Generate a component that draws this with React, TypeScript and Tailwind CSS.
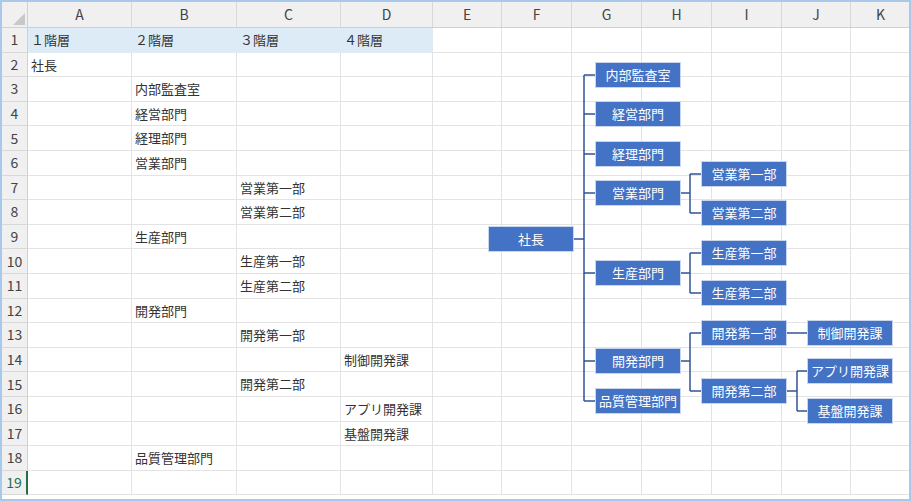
import React from "react";

const cols = [
  { n: "A", w: 104 },
  { n: "B", w: 105 },
  { n: "C", w: 104 },
  { n: "D", w: 92 },
  { n: "E", w: 69 },
  { n: "F", w: 70 },
  { n: "G", w: 70 },
  { n: "H", w: 70 },
  { n: "I", w: 70 },
  { n: "J", w: 69 },
  { n: "K", w: 60 },
];

const data: Record<number, string[]> = {
  1: ["１階層", "２階層", "３階層", "４階層"],
  2: ["社長"],
  3: ["", "内部監査室"],
  4: ["", "経営部門"],
  5: ["", "経理部門"],
  6: ["", "営業部門"],
  7: ["", "", "営業第一部"],
  8: ["", "", "営業第二部"],
  9: ["", "生産部門"],
  10: ["", "", "生産第一部"],
  11: ["", "", "生産第二部"],
  12: ["", "開発部門"],
  13: ["", "", "開発第一部"],
  14: ["", "", "", "制御開発課"],
  15: ["", "", "開発第二部"],
  16: ["", "", "", "アプリ開発課"],
  17: ["", "", "", "基盤開発課"],
  18: ["", "品質管理部門"],
};

// chart boxes: [label, x, y] in page coords, 86x26
const boxes: [string, number, number][] = [
  ["社長", 488, 226],
  ["内部監査室", 595, 62],
  ["経営部門", 595, 101],
  ["経理部門", 595, 141],
  ["営業部門", 595, 180],
  ["生産部門", 595, 260],
  ["開発部門", 595, 348],
  ["品質管理部門", 595, 388],
  ["営業第一部", 701, 161],
  ["営業第二部", 701, 200],
  ["生産第一部", 701, 240],
  ["生産第二部", 701, 280],
  ["開発第一部", 701, 320],
  ["開発第二部", 701, 378],
  ["制御開発課", 807, 320],
  ["アプリ開発課", 807, 358],
  ["基盤開発課", 807, 398],
];

const lines = [
  "M574 239H584",
  "M584 75V401",
  "M584 75H595M584 114H595M584 154H595M584 193H595M584 273H595M584 361H595M584 401H595",
  "M681 193H690M690 174V213M690 174H701M690 213H701",
  "M681 273H690M690 253V293M690 253H701M690 293H701",
  "M681 361H690M690 333V391M690 333H701M690 391H701",
  "M787 333H807",
  "M787 391H797M797 371V411M797 371H807M797 411H807",
];

export default function App() {
  const font = { fontFamily: '"Noto Sans CJK JP", "Noto Sans", sans-serif' };
  return (
    <div className="relative w-[911px] h-[501px] bg-white overflow-hidden" style={font}>
      <div className="absolute inset-0 border-2 border-[#a9c9ec] pointer-events-none z-20" />
      <div className="flex flex-col pt-[2px] pl-[2px]">
        <div className="flex h-[26px] bg-[#f0f0f0] border-b border-[#d0d0d0] text-[14px] text-[#444]">
          <div className="w-[26px] shrink-0 border-r border-[#d0d0d0] relative">
            <div className="absolute right-[2px] bottom-[2px] w-0 h-0 border-l-[12px] border-l-transparent border-b-[12px] border-b-[#c8c8c8]" />
          </div>
          {cols.map((c) => (
            <div key={c.n} style={{ width: c.w }} className="shrink-0 flex items-center justify-center border-r border-[#d8d8d8]">
              {c.n}
            </div>
          ))}
        </div>
        {Array.from({ length: 19 }, (_, i) => i + 1).map((r) => (
          <div key={r} className={`flex h-[24.6px] text-[13px] ${r === 1 ? "bg-[#ddebf7]" : ""}`}>
            <div
              className={`w-[26px] shrink-0 flex items-center justify-center bg-[#f0f0f0] text-[14px] border-b border-[#d8d8d8] ${
                r === 19 ? "text-[#217346] border-r-2 border-r-[#217346]" : "text-[#444] border-r border-r-[#d0d0d0]"
              }`}
            >
              {r}
            </div>
            {cols.map((c, ci) => (
              <div
                key={c.n}
                style={{ width: c.w }}
                className={`shrink-0 flex items-center px-[3px] text-[#333] whitespace-nowrap border-b border-r ${
                  r === 1 && ci < 4 ? "border-transparent" : "border-[#e3e3e3]"
                } ${r === 1 && ci >= 4 ? "bg-white" : ""}`}
              >
                {data[r]?.[ci] ?? ""}
              </div>
            ))}
          </div>
        ))}
      </div>
      <svg className="absolute inset-0 z-10" width={911} height={501}>
        {lines.map((d, i) => (
          <path key={i} d={d} stroke="#2f5597" strokeWidth={1.5} fill="none" />
        ))}
      </svg>
      {boxes.map(([t, x, y]) => (
        <div
          key={t}
          style={{ left: x, top: y }}
          className="absolute z-10 w-[86px] h-[26px] bg-[#4472c4] border border-[#c9d6ee] text-white text-[13px] flex items-center justify-center"
        >
          {t}
        </div>
      ))}
    </div>
  );
}
